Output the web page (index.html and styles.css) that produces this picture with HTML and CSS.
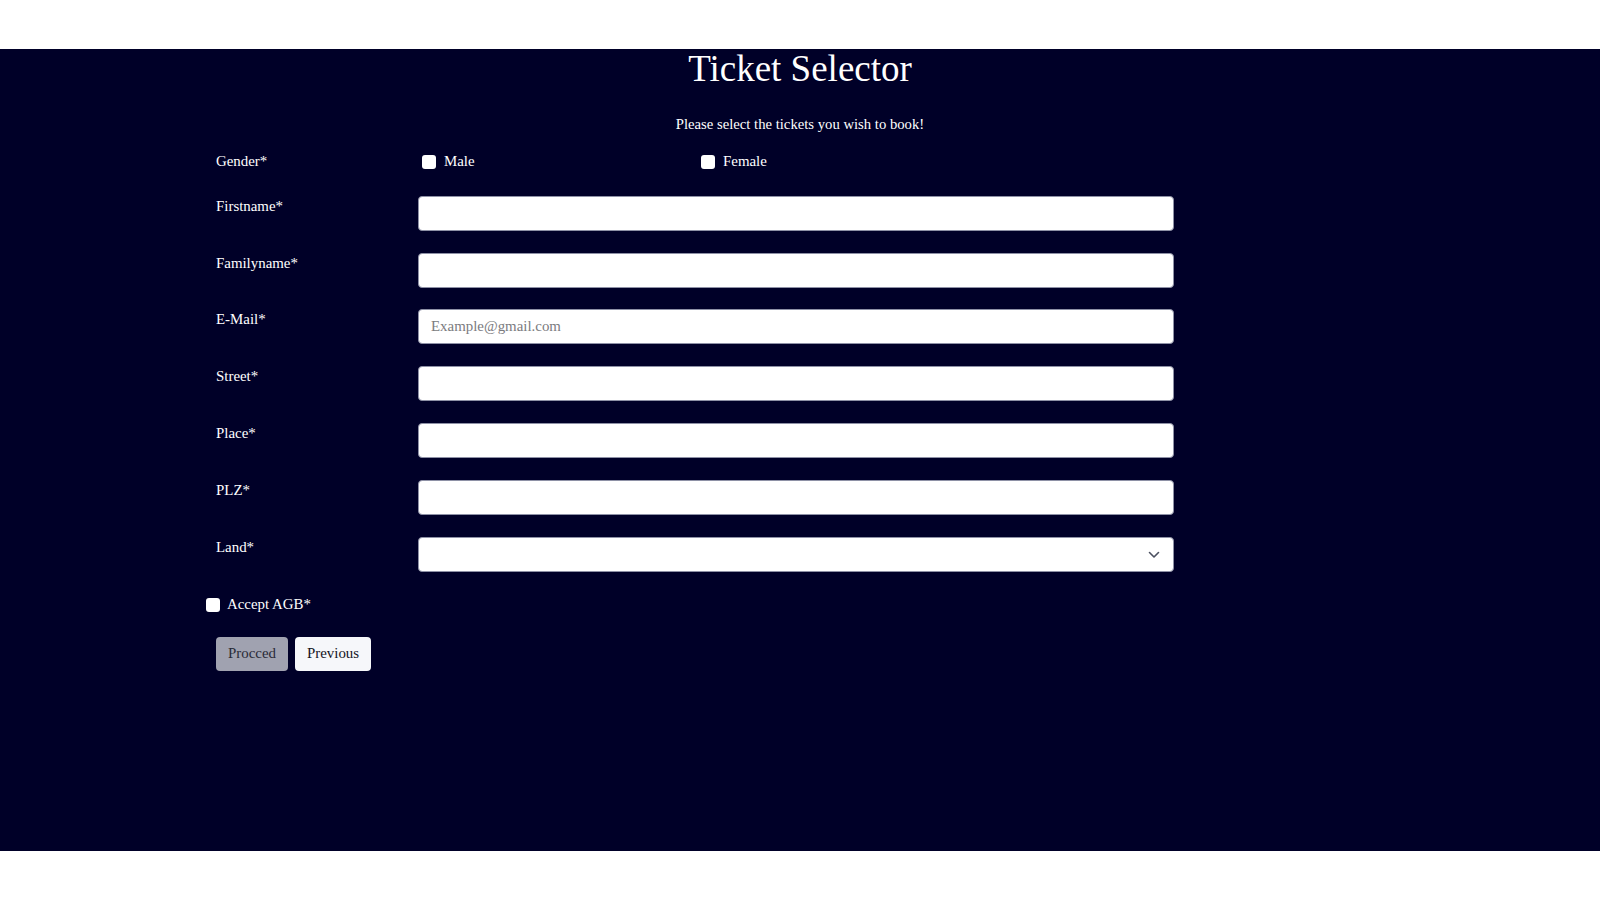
FILE: index.html
```html
<!DOCTYPE html>
<html lang="en">
<head>
<meta charset="utf-8">
<title>Ticket Selector</title>
<link rel="stylesheet" href="styles.css">
</head>
<body>
<div class="topbar"></div>
<main class="stage">
  <h1 class="title">Ticket Selector</h1>
  <p class="intro">Please select the tickets you wish to book!</p>
  <form class="booking">
    <div class="grid">
      <span class="label label-mid">Gender*</span>
      <div class="options">
        <label class="option"><input type="checkbox" class="check"> Male</label>
        <label class="option"><input type="checkbox" class="check"> Female</label>
      </div>

      <label class="label" for="firstname">Firstname*</label>
      <input class="field" id="firstname" type="text">

      <label class="label" for="familyname">Familyname*</label>
      <input class="field" id="familyname" type="text">

      <label class="label" for="email">E-Mail*</label>
      <input class="field" id="email" type="email" placeholder="Example@gmail.com">

      <label class="label" for="street">Street*</label>
      <input class="field" id="street" type="text">

      <label class="label" for="place">Place*</label>
      <input class="field" id="place" type="text">

      <label class="label" for="plz">PLZ*</label>
      <input class="field" id="plz" type="text">

      <label class="label" for="land">Land*</label>
      <div class="select-wrap">
        <select class="field select" id="land">
          <option></option>
        </select>
        <svg class="chevron" width="12" height="8" viewBox="0 0 12 8" aria-hidden="true">
          <path d="M1.5 1.5 L6 6 L10.5 1.5" fill="none" stroke="#4b5060" stroke-width="1.6" stroke-linecap="round" stroke-linejoin="round"/>
        </svg>
      </div>
    </div>

    <label class="agb"><input type="checkbox" class="check"> Accept AGB*</label>

    <div class="actions">
      <button type="button" class="btn btn-disabled">Procced</button>
      <button type="button" class="btn btn-light">Previous</button>
    </div>
  </form>
</main>
</body>
</html>
```

FILE: styles.css
```css
html, body {
  margin: 0;
  padding: 0;
  background: #ffffff;
}

body {
  font-family: "Liberation Serif", "Times New Roman", serif;
  color: #ffffff;
}

.topbar {
  height: 49px;
}

.stage {
  background: #000028;
  height: 802px;
  box-sizing: border-box;
}

.title {
  margin: 0;
  font-weight: normal;
  font-size: 37px;
  line-height: 40px;
  text-align: center;
}

.intro {
  margin: 27px 0 0;
  font-size: 14.7px;
  line-height: 17px;
  text-align: center;
}

.booking {
  margin-top: 16px;
  padding-left: 202px;
}

.grid {
  display: grid;
  grid-template-columns: 202px 756px;
  row-gap: 21.8px;
  padding-left: 14px;
  align-items: start;
}

.label {
  font-size: 14.9px;
  line-height: 17px;
  padding-top: 2px;
}

.label-mid {
  align-self: center;
  padding-top: 0;
}

.options {
  display: flex;
  align-items: center;
  height: 25px;
}

.option {
  width: 279px;
  display: flex;
  align-items: center;
  gap: 5px;
  font-size: 14.9px;
}

.check {
  appearance: none;
  -webkit-appearance: none;
  width: 14px;
  height: 14px;
  margin: 3px 3px 3px 4px;
  background: #ffffff;
  border-radius: 3px;
  border: none;
}

.field {
  box-sizing: border-box;
  width: 756px;
  height: 35px;
  margin: 0;
  padding: 0 12px;
  background: #ffffff;
  border: 1px solid #8e91a6;
  border-radius: 4px;
  font-family: "Liberation Serif", "Times New Roman", serif;
  font-size: 14.9px;
  color: #111111;
}

.field::placeholder {
  color: #7b7b80;
}

.select-wrap {
  position: relative;
  width: 756px;
  height: 35px;
}

.select {
  appearance: none;
  -webkit-appearance: none;
}

.chevron {
  position: absolute;
  right: 14px;
  top: 14px;
  pointer-events: none;
}

.agb {
  display: flex;
  align-items: center;
  gap: 4px;
  margin-top: 23px;
  font-size: 14.9px;
}

.actions {
  display: flex;
  gap: 7px;
  margin-top: 22px;
  padding-left: 14px;
}

.btn {
  height: 34px;
  padding: 0 12px;
  border: none;
  border-radius: 4px;
  font-family: "Liberation Serif", "Times New Roman", serif;
  font-size: 14.9px;
  color: #14141e;
}

.btn-disabled {
  background: #a0a2b0;
  color: #2a2b38;
}

.btn-light {
  background: #f6f7fa;
}
```
